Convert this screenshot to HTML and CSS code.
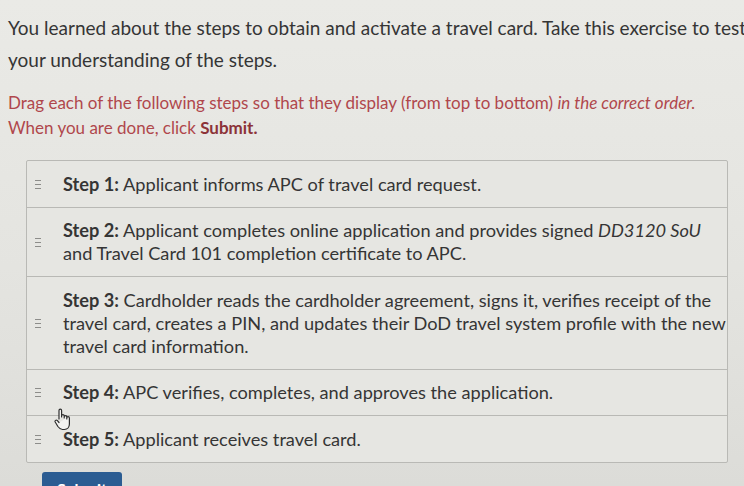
FILE: index.html
```html
<!DOCTYPE html>
<html lang="en">
<head>
    <meta charset="UTF-8">
    <meta name="viewport" content="width=device-width, initial-scale=1.0">
    <title>Travel Card Steps</title>
    <link rel="stylesheet" href="styles.css">
</head>
<body>
<p class="intro">You learned about the steps to obtain and activate a travel card. Take this exercise to test your understanding of the steps.</p>

<p class="prompt">Drag each of the following steps so that they display (from top to bottom) <em>in the correct order.</em> When you are done, click <strong>Submit.</strong></p>

<!-- 並べ替えリスト -->
<ul class="sort-list">
    <li class="sort-item">
        <span class="handle"></span>
        <div class="step-text"><strong>Step 1:</strong> Applicant informs APC of travel card request.</div>
    </li>
    <li class="sort-item">
        <span class="handle"></span>
        <div class="step-text"><strong>Step 2:</strong> Applicant completes online application and provides signed <em>DD3120 SoU</em> and Travel Card 101 completion certificate to APC.</div>
    </li>
    <li class="sort-item">
        <span class="handle"></span>
        <div class="step-text"><strong>Step 3:</strong> Cardholder reads the cardholder agreement, signs it, verifies receipt of the travel card, creates a PIN, and updates their DoD travel system profile with the new travel card information.</div>
    </li>
    <li class="sort-item">
        <span class="handle"></span>
        <div class="step-text"><strong>Step 4:</strong> APC verifies, completes, and approves the application.</div>
    </li>
    <li class="sort-item">
        <span class="handle"></span>
        <div class="step-text"><strong>Step 5:</strong> Applicant receives travel card.</div>
        <!-- マウスカーソル -->
        <svg class="cursor" width="18" height="24" viewBox="0 0 18 24">
            <path d="M5 11 V2.5 a1.3 1.3 0 0 1 2.6 0 V9 M7.6 8 a1.3 1.3 0 0 1 2.6 0 V10 M10.2 9 a1.3 1.3 0 0 1 2.6 0 V11 M12.8 10 a1.3 1.3 0 0 1 2.6 0 V16 c0 3 -2 5.5 -5 5.5 h-2 c-2 0 -3 -1 -4.5 -3 L1.2 14 a1.3 1.3 0 0 1 2 -1.6 L5 14.5"
                  fill="#f4f4f2" stroke="#2e2e2e" stroke-width="1.2" stroke-linejoin="round" stroke-linecap="round"/>
        </svg>
    </li>
</ul>

<button class="submit-btn">Submit</button>
</body>
</html>
```

FILE: styles.css
```css
body {
    margin: 0;
    padding: 12px 0 0 8px;
    font-family: Lato, "Open Sans", sans-serif;
    color: #353535;
    background: linear-gradient(180deg, #eaeae6 0%, #e4e4e0 55%, #dcdcd8 100%);
    height: 474px;
    overflow: hidden;
}
.intro {
    font-size: 19px;
    line-height: 32px;
    margin: 0;
    width: 760px;
}
.prompt {
    font-size: 17px;
    line-height: 25px;
    margin: 14px 0 0;
    width: 715px;
    color: #b0474c;
}
.prompt strong {
    color: #8c3338;
}
.sort-list {
    list-style: none;
    margin: 20px 0 0 18px;
    padding: 0;
    width: 700px;
    border: 1px solid #b9b9b5;
    border-radius: 2px;
    background-color: #e6e6e2;
}
.sort-item {
    position: relative;
    display: flex;
    align-items: center;
    padding: 11.5px 0 11px 0;
    border-top: 1px solid #b9b9b5;
}
.sort-item:first-child {
    border-top: none;
}
.handle {
    flex: none;
    width: 6px;
    height: 7px;
    margin: 0 22px 0 8px;
    border-top: 1px solid #8d8d8a;
    border-bottom: 1px solid #8d8d8a;
    position: relative;
}
.handle::after {
    content: "";
    position: absolute;
    left: 0;
    right: 0;
    top: 3px;
    border-top: 1px solid #8d8d8a;
}
.step-text {
    flex: 1;
    font-size: 18.2px;
    line-height: 23px;
}
.cursor {
    position: absolute;
    left: 27px;
    top: -8px;
}
.submit-btn {
    display: block;
    margin: 9px 0 0 34px;
    width: 80px;
    height: 34px;
    border: none;
    border-radius: 3px;
    background-color: #2b5c92;
    color: #ffffff;
    font-family: Lato, sans-serif;
    font-size: 16px;
    font-weight: bold;
}
```
